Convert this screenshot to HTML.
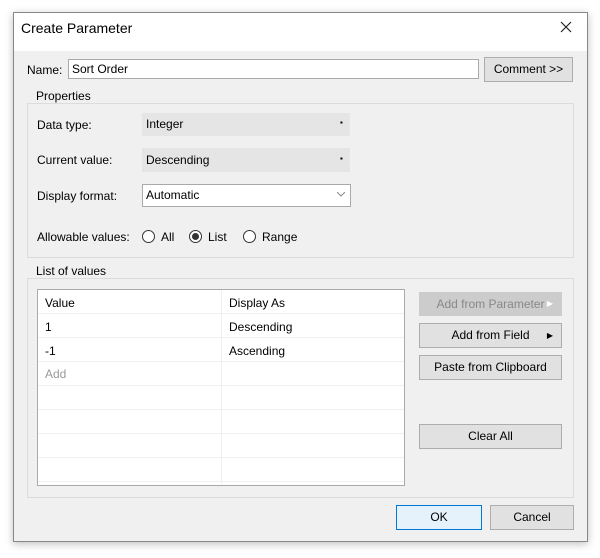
<!DOCTYPE html><html><head><style>
body{margin:0;width:600px;height:558px;background:#fff;position:relative;font-family:"Liberation Sans",sans-serif;font-size:12px;color:#000;overflow:hidden}
.a{position:absolute}
.dlg{left:13px;top:12px;width:573px;height:528px;border:1px solid #888;background:#f0f0f0;box-shadow:0 2px 8px rgba(0,0,0,.25)}
.tb{left:14px;top:13px;width:573px;height:38px;background:#fff}
.grp{border:1px solid #dcdcdc}
.gl{background:#f0f0f0;padding:0 3px}
.btn{background:#e1e1e1;border:1px solid #adadad;text-align:center;box-sizing:border-box}
.cb{background:#e5e5e5;box-sizing:border-box;padding-left:4px;line-height:22px}
.rad{width:11px;height:11px;border:1px solid #333;border-radius:50%;background:#fff}
.row{left:38px;width:366px;height:23px;border-bottom:1px solid #f0f0f0}
</style></head><body>
<div class="a dlg"></div>
<div class="a tb"></div>
<div class="a" style="left:21px;top:20px;font-size:14px">Create Parameter</div>
<svg class="a" style="left:560px;top:21px" width="12" height="12"><path d="M1 1L11 11M11 1L1 11" stroke="#222" stroke-width="1.2"/></svg>
<div class="a" style="left:27px;top:63px">Name:</div>
<div class="a" style="left:68px;top:59px;width:406px;height:18px;border:1px solid #aaa;background:#fff;padding-left:3px;line-height:18px;box-sizing:content-box">Sort Order</div>
<div class="a btn" style="left:484px;top:57px;width:89px;height:25px;line-height:23px">Comment &gt;&gt;</div>
<div class="a grp" style="left:27px;top:103px;width:545px;height:153px"></div>
<div class="a gl" style="left:33px;top:89px">Properties</div>
<div class="a" style="left:37px;top:118px">Data type:</div>
<div class="a cb" style="left:142px;top:113px;width:208px;height:23px">Integer</div>
<div class="a" style="left:340px;top:118px;font-size:8px">▪</div>
<div class="a" style="left:37px;top:153px">Current value:</div>
<div class="a cb" style="left:142px;top:148px;width:208px;height:24px;line-height:24px">Descending</div>
<div class="a" style="left:340px;top:154px;font-size:8px">▪</div>
<div class="a" style="left:37px;top:189px">Display format:</div>
<div class="a" style="left:142px;top:184px;height:21px;border:1px solid #aaa;background:#fff;padding-left:3px;line-height:21px;box-sizing:content-box;width:204px">Automatic</div>
<svg class="a" style="left:337px;top:192px" width="8" height="5"><path d="M0 0L4 4L8 0" stroke="#888" fill="none"/></svg>
<div class="a" style="left:37px;top:230px">Allowable values:</div>
<div class="a rad" style="left:142px;top:230px"></div><div class="a" style="left:161px;top:230px">All</div>
<div class="a rad" style="left:189px;top:230px"></div><div class="a" style="left:192px;top:233px;width:7px;height:7px;border-radius:50%;background:#333"></div><div class="a" style="left:208px;top:230px">List</div>
<div class="a rad" style="left:243px;top:230px"></div><div class="a" style="left:262px;top:230px">Range</div>
<div class="a grp" style="left:27px;top:278px;width:545px;height:218px"></div>
<div class="a gl" style="left:33px;top:264px">List of values</div>
<div class="a" style="left:37px;top:289px;width:366px;height:195px;border:1px solid #aaa;background:#fff"></div>
<div class="a" style="left:221px;top:290px;width:1px;height:195px;background:#f0f0f0"></div>
<div class="a row" style="top:290px"></div><div class="a row" style="top:314px"></div><div class="a row" style="top:338px"></div><div class="a row" style="top:362px"></div><div class="a row" style="top:386px"></div><div class="a row" style="top:410px"></div><div class="a row" style="top:434px"></div><div class="a row" style="top:458px"></div>
<div class="a" style="left:45px;top:296px">Value</div><div class="a" style="left:229px;top:296px">Display As</div>
<div class="a" style="left:45px;top:320px">1</div><div class="a" style="left:229px;top:320px">Descending</div>
<div class="a" style="left:45px;top:344px">-1</div><div class="a" style="left:229px;top:344px">Ascending</div>
<div class="a" style="left:45px;top:367px;color:#999">Add</div>
<div class="a btn" style="left:419px;top:292px;width:143px;height:24px;line-height:22px;background:#ccc;border-color:#ccc;color:#888">Add from Parameter<span style="position:absolute;right:8px;font-size:8px;color:#fff">▶</span></div>
<div class="a btn" style="left:419px;top:323px;width:143px;height:25px;line-height:23px">Add from Field<span style="position:absolute;right:8px;font-size:8px">▶</span></div>
<div class="a btn" style="left:419px;top:355px;width:143px;height:25px;line-height:23px">Paste from Clipboard</div>
<div class="a btn" style="left:419px;top:424px;width:143px;height:25px;line-height:23px">Clear All</div>
<div class="a btn" style="left:396px;top:505px;width:86px;height:25px;line-height:23px;border:1px solid #0078d7;background:#e5f1fb">OK</div>
<div class="a btn" style="left:490px;top:505px;width:84px;height:25px;line-height:23px">Cancel</div>
</body></html>
